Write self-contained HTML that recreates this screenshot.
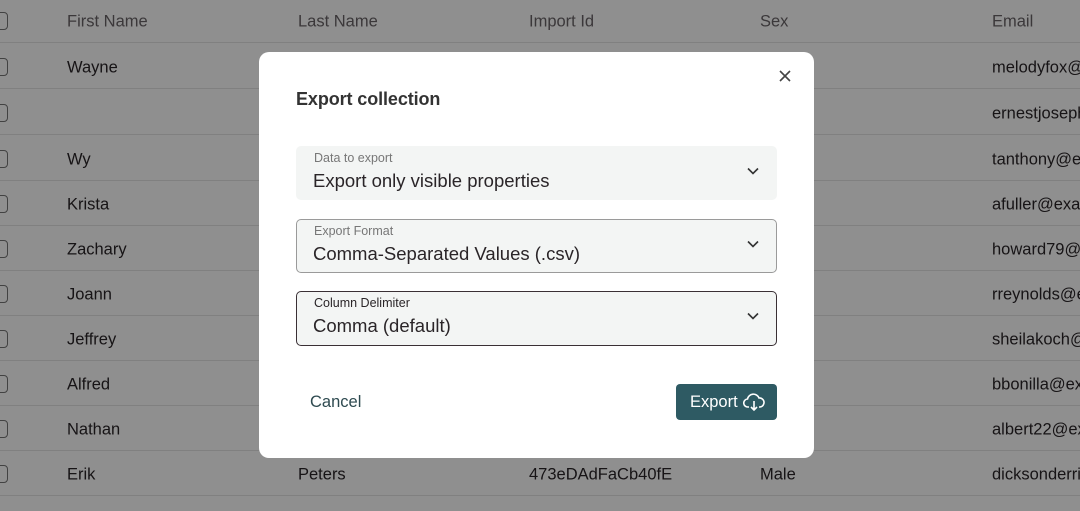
<!DOCTYPE html>
<html><head><meta charset="utf-8"><style>
body{margin:0;width:1080px;height:511px;overflow:hidden;font-family:"Liberation Sans",sans-serif;background:#fff;position:relative}
.tbl{position:absolute;inset:0;background:#fff}
.row{position:absolute;left:0;right:0;height:45px;border-bottom:1px solid #e4e4e4}
.row span{position:absolute;top:50%;transform:translateY(-50%);font-size:16.5px;color:#2a2528;white-space:nowrap;margin-top:2px}
.row.h span{color:#6a6468}
.cb{position:absolute;left:-10px;top:50%;margin-top:-8px;width:16px;height:16px;border:1.5px solid #777;border-radius:4px}
.ov{position:absolute;inset:0;background:rgba(0,0,0,0.44)}
.modal{position:absolute;left:259px;top:52px;width:555px;height:406px;background:#fff;border-radius:10px}
.t{position:absolute;left:37px;top:37px;font-size:18px;font-weight:bold;color:#333;letter-spacing:-0.1px}
.f{position:absolute;left:37px;width:481px;height:54px;background:#f3f5f4;border-radius:5px;box-sizing:border-box}
.f .l{position:absolute;left:18px;top:5px;font-size:12.5px;color:#777}
.f .v{position:absolute;left:17px;top:24px;font-size:18.5px;color:#2a2528}
.f svg{position:absolute;right:18px;top:21px}
.btn{position:absolute;left:417px;top:332px;width:101px;height:36px;background:#2e5a63;border-radius:4px;color:#fff;font-size:16.5px}
</style></head><body>
<div class="tbl">
<div class="row h" style="top:-3px"><div class="cb"></div><span style="left:67px">First Name</span><span style="left:298px">Last Name</span><span style="left:529px">Import Id</span><span style="left:760px">Sex</span><span style="left:992px">Email</span></div>
<div class="row" style="top:43px"><div class="cb"></div><span style="left:67px">Wayne</span><span style="left:992px">melodyfox@</span></div>
<div class="row" style="top:89px"><div class="cb"></div><span style="left:992px">ernestjoseph</span></div>
<div class="row" style="top:135px"><div class="cb"></div><span style="left:67px">Wy</span><span style="left:992px">tanthony@ex</span></div>
<div class="row" style="top:180px"><div class="cb"></div><span style="left:67px">Krista</span><span style="left:992px">afuller@exar</span></div>
<div class="row" style="top:225px"><div class="cb"></div><span style="left:67px">Zachary</span><span style="left:992px">howard79@e</span></div>
<div class="row" style="top:270px"><div class="cb"></div><span style="left:67px">Joann</span><span style="left:992px">rreynolds@e</span></div>
<div class="row" style="top:315px"><div class="cb"></div><span style="left:67px">Jeffrey</span><span style="left:992px">sheilakoch@</span></div>
<div class="row" style="top:360px"><div class="cb"></div><span style="left:67px">Alfred</span><span style="left:992px">bbonilla@ex</span></div>
<div class="row" style="top:405px"><div class="cb"></div><span style="left:67px">Nathan</span><span style="left:992px">albert22@ex</span></div>
<div class="row" style="top:450px"><div class="cb"></div><span style="left:67px">Erik</span><span style="left:298px">Peters</span><span style="left:529px">473eDAdFaCb40fE</span><span style="left:760px">Male</span><span style="left:992px">dicksonderri</span></div>
</div>
<div class="ov"></div>
<div class="modal">
<svg style="position:absolute;left:520px;top:18px" width="12" height="12" viewBox="0 0 12 12"><path d="M1 1L11 11M11 1L1 11" stroke="#444" stroke-width="1.6"/></svg>
<div class="t">Export collection</div>
<div class="f" style="top:94px"><div class="l">Data to export</div><div class="v">Export only visible properties</div><svg width="12" height="8" viewBox="0 0 12 8"><path d="M1 1.5L6 6.5L11 1.5" fill="none" stroke="#333" stroke-width="1.6"/></svg></div>
<div class="f" style="top:167px;border:1px solid #9a9a9a"><div class="l" style="left:17px;top:4px">Export Format</div><div class="v" style="left:16px;top:23px">Comma-Separated Values (.csv)</div><svg width="12" height="8" viewBox="0 0 12 8" style="top:20px;right:17px"><path d="M1 1.5L6 6.5L11 1.5" fill="none" stroke="#333" stroke-width="1.6"/></svg></div>
<div class="f" style="top:239px;height:55px;border:1.5px solid #3a3035"><div class="l" style="left:17px;top:4px;color:#2a2528">Column Delimiter</div><div class="v" style="left:16px;top:23px">Comma (default)</div><svg width="12" height="8" viewBox="0 0 12 8" style="top:20px;right:17px"><path d="M1 1.5L6 6.5L11 1.5" fill="none" stroke="#333" stroke-width="1.6"/></svg></div>
<div style="position:absolute;left:51px;top:341px;font-size:16.5px;color:#2e4a50">Cancel</div>
<div class="btn"><span style="position:absolute;left:14px;top:9px">Export</span>
<svg style="position:absolute;left:67px;top:8px" width="22" height="20" viewBox="0 0 22 20"><path d="M6 15H5a4 4 0 0 1-0.5-8A6 6 0 0 1 16 6a4.5 4.5 0 0 1 1 9h-1" fill="none" stroke="#fff" stroke-width="1.6"/><path d="M11 9v9M8 15l3 3 3-3" fill="none" stroke="#fff" stroke-width="1.6"/></svg></div>
</div>
</body></html>
